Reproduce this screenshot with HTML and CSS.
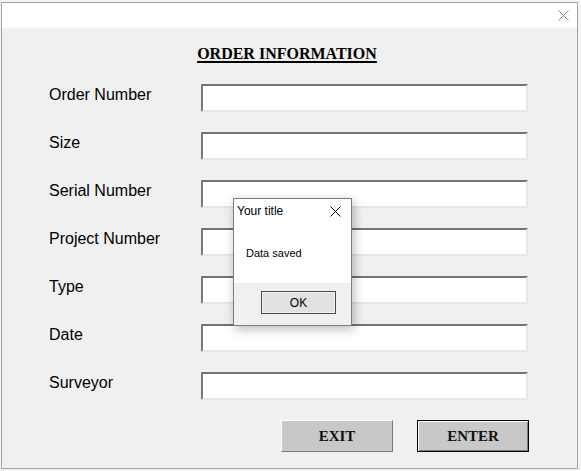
FILE: index.html
```html
<!DOCTYPE html>
<html>
<head>
<meta charset="utf-8">
<title>Order Information</title>
<link rel="stylesheet" href="styles.css">
</head>
<body>
<div class="window">
  <div class="titlebar">
    <svg class="close" width="11" height="11" viewBox="0 0 11 11"><path d="M0.5 0.5L10.5 10.5M10.5 0.5L0.5 10.5" stroke="#8c8c8c" stroke-width="1" fill="none"/></svg>
  </div>
  <div class="body">
    <h1 class="heading"><span>ORDER INFORMATION</span></h1>
    <div class="form">
      <div class="row"><label class="lbl">Order Number</label><div class="field"></div></div>
      <div class="row"><label class="lbl">Size</label><div class="field"></div></div>
      <div class="row"><label class="lbl">Serial Number</label><div class="field"></div></div>
      <div class="row"><label class="lbl">Project Number</label><div class="field"></div></div>
      <div class="row"><label class="lbl">Type</label><div class="field"></div></div>
      <div class="row"><label class="lbl">Date</label><div class="field"></div></div>
      <div class="row"><label class="lbl">Surveyor</label><div class="field"></div></div>
      <div class="buttons">
        <div class="btn">EXIT</div>
        <div class="btn default">ENTER</div>
      </div>
    </div>
  </div>
</div>

<div class="msgbox">
  <div class="msg-top">
    <div class="msg-title">
      <span>Your title</span>
      <svg width="11" height="11" viewBox="0 0 11 11"><path d="M0.5 0.5L10.5 10.5M10.5 0.5L0.5 10.5" stroke="#000" stroke-width="1" fill="none"/></svg>
    </div>
    <div class="msg-text">Data saved</div>
  </div>
  <div class="msg-foot">
    <div class="ok">OK</div>
  </div>
</div>
</body>
</html>
```
FILE: styles.css
```css
html, body {
  margin: 0;
  padding: 0;
}
body {
  width: 581px;
  height: 471px;
  background: #f4f4f4;
  position: relative;
  overflow: hidden;
  font-family: "Liberation Sans", Arial, sans-serif;
}
.window {
  margin: 2px 0 0 1px;
  width: 575px;
  height: 465px;
  border: 1px solid #a3a3a3;
  background: #f0f0f0;
  display: flex;
  flex-direction: column;
}
.titlebar {
  height: 25px;
  background: #ffffff;
  display: flex;
  justify-content: flex-end;
  align-items: flex-start;
  padding-right: 8px;
}
.close {
  margin-top: 7px;
}
.body {
  flex: 1;
  display: flex;
  flex-direction: column;
}
.heading {
  margin: 17px 0 0 0;
  padding-right: 5px;
  text-align: center;
  font-family: "Liberation Serif", "Times New Roman", serif;
  font-weight: bold;
  font-size: 16px;
  line-height: 18px;
  color: #000;
}
.heading span {
  text-decoration: underline;
  text-decoration-thickness: 2px;
  text-underline-offset: 2px;
}
.form {
  margin: 21px 0 0 47px;
  width: 480px;
  display: flex;
  flex-direction: column;
  gap: 20px;
}
.row {
  display: flex;
  align-items: flex-start;
}
.lbl {
  width: 152px;
  padding-top: 2px;
  font-size: 16px;
  line-height: 18px;
  color: #000;
}
.field {
  width: 323px;
  height: 24px;
  background: #fff;
  border-top: 2px solid #737373;
  border-left: 2px solid #7a7a7a;
  border-right: 2px solid #e6e6e6;
  border-bottom: 2px solid #e6e6e6;
}
.buttons {
  display: flex;
  justify-content: flex-end;
  gap: 24px;
}
.btn {
  box-sizing: border-box;
  width: 112px;
  height: 32px;
  background: #c8c8c8;
  border-top: 1px solid #ffffff;
  border-left: 1px solid #ffffff;
  border-right: 1px solid #7a7a7a;
  border-bottom: 1px solid #7a7a7a;
  display: flex;
  align-items: center;
  justify-content: center;
  font-family: "Liberation Serif", "Times New Roman", serif;
  font-weight: bold;
  font-size: 15px;
  color: #111;
  padding-top: 1px;
}
.btn.default {
  border: 1px solid #000;
  box-shadow: inset 1px 1px 0 #ffffff, inset -1px -1px 0 #7a7a7a;
}
.msgbox {
  position: absolute;
  left: 233px;
  top: 198px;
  width: 117px;
  height: 126px;
  border: 1px solid #7c7c7c;
  background: #fff;
  box-shadow: 2px 3px 10px rgba(0,0,0,0.28);
  display: flex;
  flex-direction: column;
}
.msg-top {
  height: 84px;
  background: #fff;
}
.msg-title {
  display: flex;
  justify-content: space-between;
  align-items: center;
  padding: 5px 10px 0 3px;
  font-size: 12px;
  line-height: 14px;
  color: #000;
}
.msg-text {
  margin: 28px 0 0 12px;
  font-size: 11px;
  line-height: 14px;
  color: #000;
}
.msg-foot {
  flex: 1;
  background: #f0f0f0;
  display: flex;
  justify-content: center;
  align-items: flex-start;
  padding-top: 8px;
  padding-left: 12px;
}
.ok {
  box-sizing: border-box;
  width: 75px;
  height: 23px;
  background: #e1e1e1;
  border: 1px solid #4a4a4a;
  box-shadow: inset 0 0 0 1px #f4f4f4;
  display: flex;
  align-items: center;
  justify-content: center;
  font-size: 12px;
  color: #000;
}
```
